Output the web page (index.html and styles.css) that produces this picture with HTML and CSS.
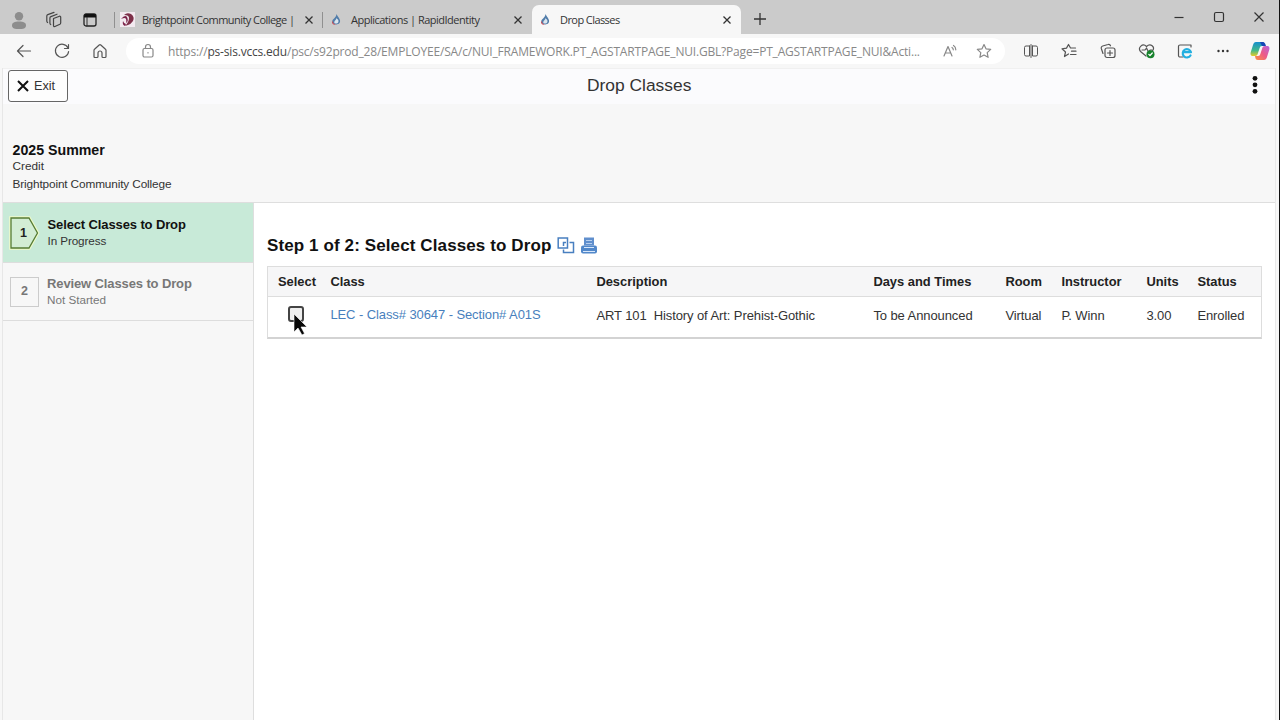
FILE: index.html
```html
<!DOCTYPE html>
<html lang="en">
<head>
<meta charset="utf-8">
<title>Drop Classes</title>
<link rel="stylesheet" href="styles.css">
</head>
<body>
<div class="window">
  <div class="tabbar">
    <div class="tab-tools">
      <svg class="i-user" width="20" height="20" viewBox="0 0 20 20"><circle cx="10" cy="6.2" r="4.2" fill="#8d8d8d"/><path d="M3 15.500c0-3 2.500-4 7-4s7 1 7 4-3 3.500-7 3.500-7-.5-7-3.500z" fill="#8d8d8d"/></svg>
      <svg class="i-work" width="18" height="18" viewBox="0 0 18 18" fill="none" stroke="#444" stroke-width="1.200" stroke-linejoin="round" stroke-linecap="round"><path d="M8.500 7.500l6-2.300q1.200-.2 1.200 1v5.600q0 1-.8 1.400l-5 2.300q-1.400.4-1.400-1zM5.700 13.500q-.8-.4-.8-1.400V7q0-1 1-1.400L12 3.200M2.600 11.500q-.8-.4-.8-1.400V5q0-1 1-1.400L9 1.400"/></svg>
      <svg class="i-panel" width="14" height="14" viewBox="0 0 14 14"><rect x="1" y="1" width="12" height="12" rx="2" fill="none" stroke="#222" stroke-width="1.300"/><path d="M1 3a2 2 0 0 1 2-2h8a2 2 0 0 1 2 2v1.500H1z" fill="#111"/><path d="M4 4v9" stroke="#333"/></svg>
    </div>
    <div class="tab tab-one">
      <svg width="15" height="15" viewBox="0 0 15 15"><rect width="15" height="15" fill="#f3eaf0"/><path d="M4 3q3-3 7-1 4 3 2 7-2 3-5 4l-3 1q4-4 4-8 0-3-5-3z" fill="#7d3049"/><path d="M1 7q4-5 6-2 2 4-1 6 1-4-1-5-2 0-4 1zM3 9q1 3 3 3l-1 2q-3-1-2-5z" fill="#7b2149"/></svg>
      <span class="tab-text">Brightpoint Community College |</span>
      <svg class="x" width="10" height="10" viewBox="0 0 10 10"><path d="M1.500 1.500l7 7m0-7l-7 7"/></svg>
    </div>
    <div class="tab tab-two">
      <svg width="11" height="13" viewBox="0 0 11 13"><path d="M5.500 1c0 4-5 5-4 8 .6 2.500 5 3.500 7 1 2-3-1-5-3-9z" fill="#517daa"/><path d="M5.500 5c0 2-3 3-2 5.200 2 1 4 0 4-2S6.500 7 5.500 5z" fill="#dbe6ef"/><path d="M1 7.500c-.5 3 1 4.500 4 4.500-2-1-3-2-4-4.500z" fill="#c14a57"/></svg>
      <span class="tab-text">Applications | RapidIdentity</span>
      <svg class="x" width="10" height="10" viewBox="0 0 10 10"><path d="M1.500 1.500l7 7m0-7l-7 7"/></svg>
    </div>
    <div class="tab tab-active">
      <svg width="11" height="13" viewBox="0 0 11 13"><path d="M5.500 1c0 4-5 5-4 8 .6 2.500 5 3.500 7 1 2-3-1-5-3-9z" fill="#517daa"/><path d="M5.500 5c0 2-3 3-2 5.200 2 1 4 0 4-2S6.500 7 5.500 5z" fill="#dbe6ef"/><path d="M1 7.500c-.5 3 1 4.500 4 4.500-2-1-3-2-4-4.500z" fill="#c14a57"/></svg>
      <span class="tab-text">Drop Classes</span>
      <svg class="x" width="10" height="10" viewBox="0 0 10 10"><path d="M1.500 1.500l7 7m0-7l-7 7"/></svg>
    </div>
    <svg class="i-plus" width="14" height="14" viewBox="0 0 14 14"><path d="M7 1v12M1 7h12"/></svg>
    <div class="controls">
      <svg width="12" height="12" viewBox="0 0 12 12"><path d="M1.500 6.500h9"/></svg>
      <svg width="12" height="12" viewBox="0 0 12 12"><rect x="1.500" y="1.500" width="9" height="9" rx="1.500"/></svg>
      <svg width="12" height="12" viewBox="0 0 12 12"><path d="M1.500 1.500l9 9m0-9l-9 9"/></svg>
    </div>
  </div>

  <div class="toolbar">
    <div class="nav">
      <svg width="16" height="16" viewBox="0 0 16 16"><path d="M14.500 8H1.500M7 2.500L1.500 8 7 13.500"/></svg>
      <svg width="16" height="16" viewBox="0 0 16 16"><path d="M14 5A6.600 6.600 0 1 0 14.600 8.500M14.500 1.500v4H10.500"/></svg>
      <svg width="16" height="16" viewBox="0 0 16 16"><path d="M2 7.300q0-.6.500-1L7.200 2q.8-.6 1.600 0l4.700 4.300q.5.400.5 1V13.500q0 1-1 1h-2q-1 0-1-1V10a2 2 0 0 0-4 0v3.500q0 1-1 1H3q-1 0-1-1z"/></svg>
    </div>
    <div class="address">
      <svg class="i-lock" width="14" height="16" viewBox="0 0 14 16"><rect x="2" y="5.500" width="10" height="8.500" rx="1.500"/><path d="M4.500 5.500V4a2.500 2.500 0 0 1 5 0v1.500M7 9.500v.5"/></svg>
      <span class="url">https://<b>ps-sis.vccs.edu</b>/psc/s92prod_28/EMPLOYEE/SA/c/NUI_FRAMEWORK.PT_AGSTARTPAGE_NUI.GBL?Page=PT_AGSTARTPAGE_NUI&amp;Acti...</span>
      <svg class="i-read" width="16" height="16" viewBox="0 0 16 16"><path d="M2 13L6 3.500 10 13M3.500 10h5M10 4.500q1.300.8 1.300 2.300M11.500 2.500q2.300 1.500 2.300 4.300"/></svg>
      <svg class="i-star" width="16" height="16" viewBox="0 0 16 16"><path d="M8 1.500l2 4.300 4.700.6-3.500 3.200.9 4.700L8 12l-4.100 2.300.9-4.700L1.300 6.400 6 5.800z"/></svg>
    </div>
    <div class="tools">
      <svg width="16" height="16" viewBox="0 0 16 16"><path d="M6 3H3a1.500 1.500 0 0 0-1.500 1.500v7A1.500 1.500 0 0 0 3 13h3.500V3zM10 3h3a1.500 1.500 0 0 1 1.500 1.500v7A1.500 1.500 0 0 1 13 13H9.500V3zM8 1.500v13" stroke-width="1"/></svg>
      <svg width="16" height="16" viewBox="0 0 16 16"><path d="M7.500 11L3.500 13.500l1-4.500L1 5.800l4.500-.7L7.500 1.500l2 3.500h5M10.500 8.200h4.500M9.500 11.500h5.500"/></svg>
      <svg width="16" height="16" viewBox="0 0 16 16"><rect x="5" y="5" width="10" height="9.500" rx="2"/><path d="M10 7.500v5M7.500 10h5M3 10.500L1.300 5.500A2 2 0 0 1 2.700 3L8 1.500a2 2 0 0 1 2.500 1.300"/></svg>
      <svg width="18" height="16" viewBox="0 0 18 16"><path d="M8 13L2.500 8.500C-.5 5 4.500-.5 8.500 3.500c4-4 9 .5 6 4.500M4 7h3l1.500-2 2 4 1.500-2h2"/><circle cx="12.500" cy="11.200" r="4" fill="#16812b" stroke="none"/><path d="M10.800 11.300l1.200 1.200 2.300-2.500" stroke="#fff"/></svg>
      <svg width="16" height="16" viewBox="0 0 16 16"><path d="M6 14H3a1.500 1.500 0 0 1-1.500-1.500v-9A1.500 1.500 0 0 1 3 2h11v2"/><path d="M13.500 12.500A4.200 4.200 0 1 1 14 9.200H7.500" stroke="#22afe0" stroke-width="2.200"/></svg>
      <svg width="16" height="16" viewBox="0 0 16 16"><g fill="#333" stroke="none"><circle cx="3.500" cy="8" r="1.200"/><circle cx="8" cy="8" r="1.200"/><circle cx="12.500" cy="8" r="1.200"/></g></svg>
      <svg class="copilot" width="20" height="20" viewBox="0 0 20 20"><defs><linearGradient id="ca" x1="0" y1="0" x2="0" y2="1"><stop stop-color="#168fce"/><stop offset=".6" stop-color="#42b98a"/><stop offset="1" stop-color="#e7cb27"/></linearGradient><linearGradient id="cb" x1="1" y1="0" x2="0" y2="1"><stop stop-color="#b565df"/><stop offset=".5" stop-color="#ed5a86"/><stop offset="1" stop-color="#f99341"/></linearGradient></defs><g stroke="none"><path d="M6 1h6c2 0 2.300 1 3 4h-3c-1.500 0-2 .8-2.500 2.500L8 12c-.5 2-1 3-3 3H3c-2.500 0-2.800-2-2.200-4L3 4c.6-2 1.500-3 3-3z" fill="url(#ca)"/><path d="M10 1h3c1.300 0 2 1 3 4h-4z" fill="#1647b6"/><path d="M14 19H8c-2 0-2.500-1-3-4h3c1.500 0 2-.8 2.500-2.500L12 8c.5-2 1-3 3-3h2c2.500 0 2.800 2 2.200 4L17 16c-.6 2-1.500 3-3 3z" fill="url(#cb)"/></g></svg>
    </div>
  </div>

  <div class="page">
    <header class="page-head">
      <button class="exit"><svg width="12" height="12" viewBox="0 0 12 12"><path d="M1 1l10 10M11 1L1 11"/></svg><span>Exit</span></button>
      <h1><span>Drop Classes</span></h1>
      <svg class="kebab" width="6" height="20" viewBox="0 0 6 20"><circle cx="3" cy="3.300" r="2.400"/><circle cx="3" cy="9.800" r="2.400"/><circle cx="3" cy="16.300" r="2.400"/></svg>
    </header>
    <section class="term">
      <h2><span>2025 Summer</span></h2>
      <p class="credit">Credit</p>
      <p class="college">Brightpoint Community College</p>
    </section>
    <div class="body">
      <aside>
        <div class="step current">
          <svg width="30" height="34" viewBox="0 0 30 34"><path d="M2 2H20l8.500 15L20 32H2z" fill="none" stroke="#effbc8" stroke-width="3.500"/><path d="M2 2H20l8.500 15L20 32H2z" fill="#d3edd4" stroke="#557b35" stroke-width="1.300"/><text x="11" y="21" class="num">1</text></svg>
          <div><strong class="s1">Select Classes to Drop</strong><span>In Progress</span></div>
        </div>
        <div class="step next">
          <i>2</i>
          <div><strong class="s2">Review Classes to Drop</strong><span>Not Started</span></div>
        </div>
      </aside>
      <main>
        <div class="heading">
          <h3>Step 1 of 2: Select Classes to Drop</h3>
          <svg width="18" height="17" viewBox="0 0 18 17" fill="none" stroke="#487fc0" stroke-width="1.500"><rect x="1.200" y="1" width="9.300" height="10"/><path d="M12.500 5.500h4V15.500H6.500V12.500M6.500 9V5.500H9"/></svg>
          <svg width="18" height="17" viewBox="0 0 18 17"><path d="M4 .5h10v8H4z" fill="#608fcd"/><rect x="1" y="8.500" width="16" height="8" rx="2" fill="#5288ca"/><path d="M6 3.500h6M6 6.500h6" stroke="#b8d0ef"/><path d="M4 10.500h10M3 14.500h12" stroke="#d8e7fa"/></svg>
        </div>
        <div class="grid">
          <div class="row head"><span>Select</span><span>Class</span><span>Description</span><span>Days and Times</span><span>Room</span><span>Instructor</span><span>Units</span><span>Status</span></div>
          <div class="row data"><span class="check"><i></i><svg class="cursor" width="15" height="24" viewBox="0 0 15 24"><path d="M1 1v18l4-4 4 7 2.500-1.500L8 14h6z" fill="#080808" stroke="#fff" stroke-width=".6"/></svg></span><a>LEC - Class# 30647 - Section# A01S</a><span class="desc">ART 101&nbsp; History of Art: Prehist-Gothic</span><span>To be Announced</span><span>Virtual</span><span>P. Winn</span><span>3.00</span><span>Enrolled</span></div>
        </div>
      </main>
    </div>
  </div>
</div>
</body>
</html>
```
FILE: styles.css
```css
* { box-sizing: border-box; }
body { margin: 0; width: 1280px; height: 720px; overflow: hidden; background: #111; font: 13px "Liberation Sans", Arial, sans-serif; color: #333; }
h1, h2, h3, p { margin: 0; }
svg { display: block; flex: none; overflow: visible; }
.window { width: 1279px; height: 720px; display: flex; flex-direction: column; background: #f7f7f7; }
.tabbar { height: 34px; flex: none; background: #cbcbcb; display: flex; align-items: center; padding-top: 5px; font: 11px "Open Sans", sans-serif; }
.tab-tools { width: 114px; display: flex; align-items: center; padding-left: 9px; }
.i-work { margin-left: 16px; }
.i-panel { margin-left: 20px; }
.tab { height: 29px; display: flex; align-items: center; white-space: nowrap; color: #333; }
.x { margin-left: auto; stroke: #333; stroke-width: 1.3; }
.tab-one { width: 209px; padding: 0 9px 0 6px; position: relative; }
.tab-one::before, .tab-one::after { content: ""; position: absolute; top: 7px; left: 0; width: 1px; height: 16px; background: #909090; }
.tab-one::after { left: 208px; }
.tab-one .tab-text { margin-left: 7px; letter-spacing: -.55px; }
.tab-two { width: 209px; padding: 0 9px 0 8px; }
.tab-two .tab-text { margin-left: 9px; letter-spacing: -.5px; }
.tab-active { width: 209px; padding: 0 9px 0 8px; background: #f7f7f7; border-radius: 7px 7px 0 0; }
.tab-active .tab-text { margin-left: 9px; letter-spacing: -.57px; }
.i-plus { margin: -1px 0 0 12px; stroke: #333; stroke-width: 1.3; }
.controls { margin: -5px 14px 0 auto; display: flex; gap: 28px; fill: none; stroke: #333; stroke-width: 1.2; }
.toolbar { height: 34px; flex: none; display: flex; align-items: center; background: #f7f7f7; }
.toolbar svg { fill: none; stroke: #555; stroke-width: 1.2; stroke-linecap: round; stroke-linejoin: round; }
.nav { width: 126px; display: flex; gap: 22px; padding-left: 16px; }
.address { width: 879px; height: 26px; border-radius: 13px; background: #fff; display: flex; align-items: center; padding-left: 15px; }
.address .i-lock { stroke: #888; }
.url { margin-left: 13px; font: 12px "Open Sans", sans-serif; color: #888; width: 774px; letter-spacing: -.19px; white-space: nowrap; }
.url b { font-weight: 400; color: #444; }
.address .i-star { margin-left: 18px; stroke: #888; }
.address .i-read { stroke: #888; }
.tools { display: flex; align-items: center; margin-left: 18px; gap: 22.4px; }
.tools svg:nth-child(4) { margin-right: -2px; }
.tools svg:nth-child(7) { margin-left: -3px; }
.page { flex: 1; min-height: 0; margin: 0 3px 0 2px; display: flex; flex-direction: column; background: #f7f7f7; border-left: 1px solid #e7e7e7; border-right: 1px solid #e9e9e9; }
.page-head { height: 36px; flex: none; display: flex; align-items: center; background: #fbfbfd; border-top: 1px solid #f0f0f0; }
.exit { width: 60px; height: 32px; margin-left: 5px; margin-top: -1px; border: 1px solid #666; border-radius: 3px; background: #fdfdfd; display: flex; align-items: center; padding: 0 0 0 8px; font: 12.7px "Liberation Sans", sans-serif; color: #333; }
.exit svg { stroke: #111; stroke-width: 2; }
.exit span { margin-left: 5px; }
h1 { width: 120px; margin: 0 0 3px 519px; white-space: nowrap; font-size: 17.4px; font-weight: 400; }
.kebab { margin: 0 0 3px auto; margin-right: 17px; fill: #111; }
.term { height: 99px; flex: none; padding: 38px 0 0 9.500px; color: #333; border-bottom: 1px solid #dedede; }
h2 { font-size: 14.2px; line-height: 17px; color: #111; }
.term p { font-size: 11.8px; line-height: 15px; }
.term .college { font-size: 11.8px; line-height: 20px; letter-spacing: -.13px; }
.body { flex: 1; display: flex; min-height: 0; }
aside { width: 251px; border-right: 1px solid #dedede; }
.step { display: flex; align-items: center; border-bottom: 1px solid #ddd; white-space: nowrap; }
.step strong, .step span { display: block; }
.step strong { font-size: 13px; line-height: 16px; letter-spacing: -.12px; }
.step span { font-size: 11.7px; line-height: 16px; }
.current { height: 60px; background: #c8ead8; padding-left: 6px; }
.current strong { color: #111; }
.current > div { margin-left: 8.500px; }
.current span { letter-spacing: -.1px; }
.num { font: bold 12.5px "Liberation Sans", sans-serif; fill: #222; }
.next { height: 58px; padding-left: 7px; color: #777; }
.next i { width: 29px; height: 30px; border: 1px solid #ccc; display: grid; place-items: center; font: bold 12.5px "Liberation Sans", sans-serif; padding-bottom: 2px; }
.next > div { margin-left: 8px; }
main { flex: 1; background: #fff; padding: 33px 13px 0; }
.heading { display: flex; align-items: center; height: 20px; white-space: nowrap; }
h3 { width: 290px; font-size: 17px; letter-spacing: .11px; color: #111; }
.heading svg { margin-bottom: 2px; }
.heading svg + svg { margin-left: 5px; }
.grid { margin-top: 10px; height: 73px; border: 1px solid #ddd; border-bottom: 2px solid #d3d3d3; }
.row { display: grid; grid-template-columns: 62.4px 266px 277px 132px 56px 85px 51px 1fr; align-items: center; white-space: nowrap; }
.head { height: 30px; background: #f6f6f7; border-bottom: 1px solid #ddd; font-weight: 700; color: #222; font-size: 12.9px; }
.head span:first-child { padding-left: 10px; }
.data { height: 36px; font-size: 13px; letter-spacing: -.09px; }
.data a { color: #487fbd; margin-top: -2px; }
.check { position: relative; }
.check i { display: block; width: 16px; height: 16px; margin: -2px 0 0 20px; border: 2px solid #444; border-radius: 3px; background: #eee; }
.cursor { position: absolute; left: 25px; top: 5px; }
```
